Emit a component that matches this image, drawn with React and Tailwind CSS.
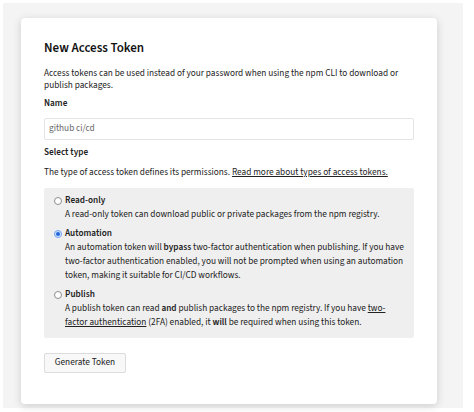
import React, { useState } from 'react';

const font = { fontFamily: '"Source Sans 3", "Source Sans Pro", Lato, sans-serif' };

const Radio = ({ checked }) => (
  <span
    className={`mt-[3px] flex h-[8px] w-[8px] shrink-0 items-center justify-center rounded-full border ${
      checked ? 'border-[#6ea3f2] bg-[#d6e5fb]' : 'border-[#8d8d8d] bg-white'
    }`}
  >
    {checked && <span className="h-[4px] w-[4px] rounded-full bg-[#1f66db]" />}
  </span>
);

const App = () => {
  const [type, setType] = useState('automation');

  const options = [
    {
      id: 'readonly',
      label: 'Read-only',
      desc: <>A read-only token can download public or private packages from the npm registry.</>,
    },
    {
      id: 'automation',
      label: 'Automation',
      desc: (
        <>
          An automation token will <b className="font-semibold">bypass</b> two-factor authentication when publishing. If you have
          <br />
          two-factor authentication enabled, you will not be prompted when using an automation
          <br />
          token, making it suitable for CI/CD workflows.
        </>
      ),
    },
    {
      id: 'publish',
      label: 'Publish',
      desc: (
        <>
          A publish token can read <b className="font-semibold">and</b> publish packages to the npm registry. If you have{' '}
          <span className="underline">two-</span>
          <br />
          <span className="underline">factor authentication</span> (2FA) enabled, it <b className="font-semibold">will</b> be
          required when using this token.
        </>
      ),
    },
  ];

  return (
    <div className="h-[412px] w-[474px] bg-white p-[3px]" style={font}>
      <div className="h-[405px] w-[460px] bg-[#f4f4f4] pl-[18px] pt-[15px]">
        <div className="w-[416px] rounded-[4px] bg-white px-[23px] pb-[31px] pt-[21px] text-[#222] shadow-[0_2px_8px_rgba(0,0,0,0.16)]">
          <h1 className="text-[13px] font-semibold leading-[18px] text-[#111]">New Access Token</h1>
          <p className="mt-[11px] whitespace-nowrap text-[9.25px] leading-[12px]">
            Access tokens can be used instead of your password when using the npm CLI to download or
            <br />
            publish packages.
          </p>
          <div className="mt-[6px] text-[9.25px] font-semibold leading-[12px]">Name</div>
          <div className="mt-[8px] flex h-[22px] items-center rounded-[2px] border border-[#e4e4e4] px-[4px] text-[9.25px] text-[#666]">
            github ci/cd
          </div>
          <div className="mt-[7px] text-[9.25px] font-semibold leading-[12px]">Select type</div>
          <p className="mt-[8px] whitespace-nowrap text-[9.25px] leading-[12px]">
            The type of access token defines its permissions.{' '}
            <span className="underline">Read more about types of access tokens.</span>
          </p>
          <div className="mt-[9px] flex flex-col gap-[5px] rounded-[2px] bg-[#efefef] pb-[8px] pl-[10px] pr-[6px] pt-[6px]">
            {options.map((o) => (
              <div key={o.id} className="flex cursor-pointer gap-[3px]" onClick={() => setType(o.id)}>
                <Radio checked={type === o.id} />
                <div className="whitespace-nowrap text-[9.25px] leading-[14px]">
                  <div className="font-semibold">{o.label}</div>
                  <div>{o.desc}</div>
                </div>
              </div>
            ))}
          </div>
          <button className="mt-[15px] flex h-[20px] w-[82px] items-center justify-center rounded-[2px] border border-[#dcdcdc] bg-[#f8f8f8] text-[9.25px] text-[#222]">
            Generate Token
          </button>
        </div>
      </div>
    </div>
  );
};

export default App;
